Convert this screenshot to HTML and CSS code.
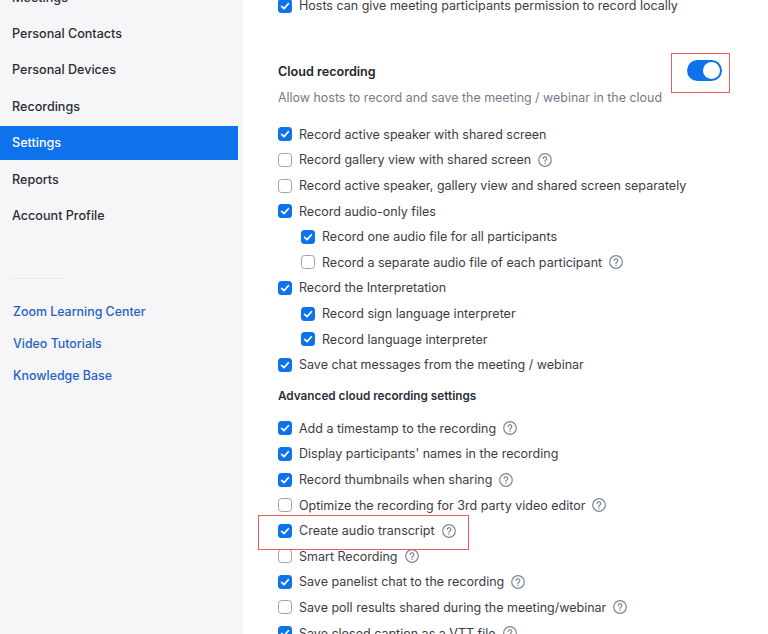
FILE: index.html
```html
<!DOCTYPE html>
<html lang="en">
<head>
<meta charset="utf-8">
<title>Settings</title>
<link rel="stylesheet" href="styles.css">
</head>
<body>
<svg class="defs" width="0" height="0" aria-hidden="true">
  <symbol id="tick" viewBox="0 0 14 14"><path d="M3.6 7.3 6 9.6l4.4-4.9" fill="none" stroke="#fff" stroke-width="1.7" stroke-linecap="round" stroke-linejoin="round"/></symbol>
  <symbol id="help" viewBox="0 0 14 14"><circle cx="7" cy="7" r="6.3" fill="none" stroke="#7d8794" stroke-width="1.2"/><path d="M5.2 5.5a1.8 1.8 0 1 1 2.7 1.6c-.6.35-.9.7-.9 1.3" fill="none" stroke="#7d8794" stroke-width="1.2" stroke-linecap="round"/><circle cx="7" cy="10.2" r=".75" fill="#7d8794"/></symbol>
</svg>
<div class="page">
  <aside class="sidebar">
    <nav class="nav">
      <a class="nav-item">Meetings</a>
      <a class="nav-item">Personal Contacts</a>
      <a class="nav-item">Personal Devices</a>
      <a class="nav-item">Recordings</a>
      <a class="nav-item active">Settings</a>
      <a class="nav-item">Reports</a>
      <a class="nav-item">Account Profile</a>
    </nav>
    <div class="divider"></div>
    <div class="links">
      <a class="link">Zoom Learning Center</a>
      <a class="link">Video Tutorials</a>
      <a class="link">Knowledge Base</a>
    </div>
  </aside>
  <main class="main">
    <div class="row"><span class="box on"><svg><use href="#tick"/></svg></span>Hosts can give meeting participants permission to record locally</div>
    <div class="section-head">
      <h2 class="title">Cloud recording</h2>
      <span class="toggle"><span class="knob"></span></span>
    </div>
    <p class="desc">Allow hosts to record and save the meeting / webinar in the cloud</p>
    <div class="row"><span class="box on"><svg><use href="#tick"/></svg></span>Record active speaker with shared screen</div>
    <div class="row"><span class="box"></span>Record gallery view with shared screen<svg class="help"><use href="#help"/></svg></div>
    <div class="row"><span class="box"></span>Record active speaker, gallery view and shared screen separately</div>
    <div class="row"><span class="box on"><svg><use href="#tick"/></svg></span>Record audio-only files</div>
    <div class="row sub"><span class="box on"><svg><use href="#tick"/></svg></span>Record one audio file for all participants</div>
    <div class="row sub"><span class="box"></span>Record a separate audio file of each participant<svg class="help"><use href="#help"/></svg></div>
    <div class="row"><span class="box on"><svg><use href="#tick"/></svg></span>Record the Interpretation</div>
    <div class="row sub"><span class="box on"><svg><use href="#tick"/></svg></span>Record sign language interpreter</div>
    <div class="row sub"><span class="box on"><svg><use href="#tick"/></svg></span>Record language interpreter</div>
    <div class="row"><span class="box on"><svg><use href="#tick"/></svg></span>Save chat messages from the meeting / webinar</div>
    <h3 class="subtitle">Advanced cloud recording settings</h3>
    <div class="row"><span class="box on"><svg><use href="#tick"/></svg></span>Add a timestamp to the recording<svg class="help"><use href="#help"/></svg></div>
    <div class="row"><span class="box on"><svg><use href="#tick"/></svg></span>Display participants' names in the recording</div>
    <div class="row"><span class="box on"><svg><use href="#tick"/></svg></span>Record thumbnails when sharing<svg class="help"><use href="#help"/></svg></div>
    <div class="row"><span class="box"></span>Optimize the recording for 3rd party video editor<svg class="help"><use href="#help"/></svg></div>
    <div class="row"><span class="box on"><svg><use href="#tick"/></svg></span>Create audio transcript<svg class="help"><use href="#help"/></svg></div>
    <div class="row"><span class="box"></span>Smart Recording<svg class="help"><use href="#help"/></svg></div>
    <div class="row"><span class="box on"><svg><use href="#tick"/></svg></span>Save panelist chat to the recording<svg class="help"><use href="#help"/></svg></div>
    <div class="row"><span class="box"></span>Save poll results shared during the meeting/webinar<svg class="help"><use href="#help"/></svg></div>
    <div class="row"><span class="box on"><svg><use href="#tick"/></svg></span>Save closed caption as a VTT file<svg class="help"><use href="#help"/></svg></div>
  </main>
  <div class="mark mark-toggle"></div>
  <div class="mark mark-transcript"></div>
</div>
</body>
</html>
```
FILE: styles.css
```css
* { box-sizing: border-box; }
html, body { margin: 0; height: 100%; overflow: hidden; background: #fff; }
body { font-family: Inter, "Liberation Sans", sans-serif; color: #2d2f36; }
.defs { position: absolute; }
.page { position: relative; display: flex; width: 768px; height: 634px; overflow: hidden; }

.sidebar { flex: 0 0 243px; height: 634px; background: #f6f6f9; }
.nav { margin-top: -21px; padding-right: 5px; }
.nav-item { display: flex; align-items: center; height: 36.4px; padding-left: 12px; font-size: 12.6px; font-weight: 500; color: #2b2d33; }
.nav-item.active { border-top: 1px solid transparent; border-bottom: 1px solid transparent; background: #0e72ed; background-clip: padding-box; color: #fff; }
.divider { width: 52px; height: 1px; margin: 44px 0 0 11px; background: #e9e9ed; }
.links { display: flex; flex-direction: column; margin-top: 17px; padding-left: 13px; }
.link { display: flex; align-items: center; height: 32px; font-size: 12.4px; font-weight: 500; color: #1f63c4; }

.main { flex: 1; padding: 0 0 0 35px; margin-top: -7px; }
.row { display: flex; align-items: center; height: 25.6px; color: #3a3d45; white-space: nowrap; font-size: 12.5px; }
.row.sub { padding-left: 23px; }
.box { flex: 0 0 14px; width: 14px; height: 14px; margin-right: 7px; border: 1px solid #9aa2ad; border-radius: 3.5px; background: #fff; }
.box.on { border: 0; background: #0e72ed; }
.box svg { display: block; width: 14px; height: 14px; }
.help { flex: 0 0 14px; width: 14px; height: 14px; margin-left: 7px; }

.section-head { display: flex; align-items: center; justify-content: space-between; margin-top: 40px; height: 26px; padding-right: 46px; }
.title { margin: 0; font-size: 12.6px; font-weight: 600; color: #23252b; }
.toggle { display: flex; align-items: center; justify-content: flex-end; width: 35px; height: 21px; margin-top: -2px; padding-right: 2px; border-radius: 11px; background: #0e72ed; }
.knob { width: 17px; height: 17px; border-radius: 50%; background: #fff; }
.desc { margin: 0; height: 37px; padding-top: 4px; font-size: 12.45px; line-height: 18px; color: #747b87; }
.subtitle { display: flex; align-items: center; height: 38px; margin: 0; padding-bottom: 2px; font-size: 11.75px; font-weight: 600; color: #2d2f36; }

.mark { position: absolute; border: 1px solid #ef5a5f; }
.mark-toggle { left: 671px; top: 53px; width: 59px; height: 40px; }
.mark-transcript { left: 258px; top: 515px; width: 211px; height: 35px; }
```
